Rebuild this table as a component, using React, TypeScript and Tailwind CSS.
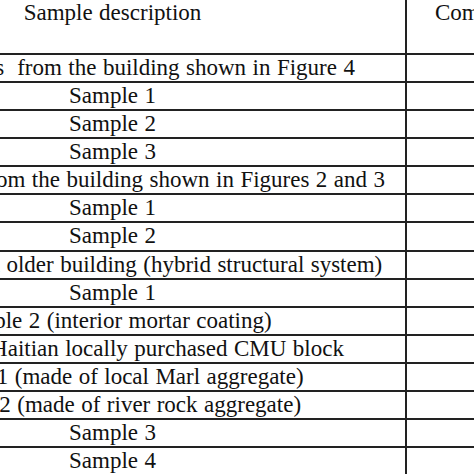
import React from "react";

const rows: string[] = [
  "Grout samples  from the building shown in Figure 4",
  "Sample 1",
  "Sample 2",
  "Sample 3",
  "Grout samples from the building shown in Figures 2 and 3",
  "Sample 1",
  "Sample 2",
  "Samples from an older building (hybrid structural system)",
  "Sample 1",
  "Sample 2 (interior mortar coating)",
  "Samples of Haitian locally purchased CMU block",
  "Sample 1 (made of local Marl aggregate)",
  "Sample 2 (made of river rock aggregate)",
  "Sample 3",
  "Sample 4",
];

export default function App() {
  return (
    <div className="w-[474px] h-[474px] overflow-hidden bg-white text-[#111] font-['Liberation_Serif','Times_New_Roman',serif] text-[23px] leading-[26px] [word-spacing:0.7px]">
      <div className="ml-[-180px] w-[800px] flex flex-col">
        <div className="flex h-[53px]">
          <div className="w-[585px] shrink-0 text-center whitespace-pre">Sample description</div>
          <div className="w-[215px] shrink-0 border-l-2 border-[#222] pl-[28px] whitespace-pre">Compressive</div>
        </div>
        {rows.map((r, i) => (
          <div key={i} className="flex h-[28.09px] border-t-2 border-[#222]">
            <div className="w-[585px] shrink-0 text-center whitespace-pre">{r}</div>
            <div className="w-[215px] shrink-0 border-l-2 border-[#222]"></div>
          </div>
        ))}
      </div>
    </div>
  );
}
